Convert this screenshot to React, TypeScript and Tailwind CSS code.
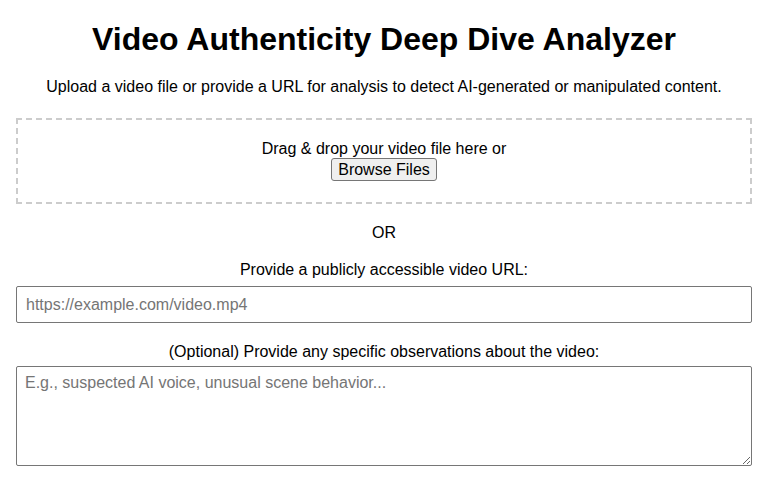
export default function App() {
  return (
    <div className="min-h-[480px] bg-white px-4 text-black" style={{ fontFamily: '"Liberation Sans", Arial, sans-serif' }}>
      <h1 className="pt-[21px] text-center text-[32px] font-bold leading-[37px]">
        Video Authenticity Deep Dive Analyzer
      </h1>
      <p className="mt-[20px] text-center text-base leading-[18px]">
        Upload a video file or provide a URL for analysis to detect AI-generated or manipulated content.
      </p>
      <div className="mt-[22px] border-2 border-dashed border-[#cccccc] p-5 text-center">
        <p className="text-base leading-[18px]">Drag &amp; drop your video file here or</p>
        <button className="rounded-[3px] border border-[#767676] bg-[#efefef] px-[6px] py-px text-base leading-[19px] text-black">
          Browse Files
        </button>
      </div>
      <p className="mt-[20px] text-center text-base leading-[18px]">OR</p>
      <label className="mt-[19px] block text-center text-base leading-[18px]">
        Provide a publicly accessible video URL:
      </label>
      <input
        type="text"
        placeholder="https://example.com/video.mp4"
        className="mt-[7px] box-border block h-[37px] w-full rounded-[2px] border border-[#767676] px-[9px] text-base text-black placeholder:text-[#757575] outline-none"
      />
      <label className="mt-[20px] block text-center text-base leading-[18px]">
        (Optional) Provide any specific observations about the video:
      </label>
      <textarea
        placeholder="E.g., suspected AI voice, unusual scene behavior..."
        className="mt-[5px] box-border block h-[100px] w-full resize-y rounded-[2px] border border-[#767676] px-[8px] py-[7px] text-base leading-[18px] text-black placeholder:text-[#757575] outline-none"
      />
    </div>
  );
}
